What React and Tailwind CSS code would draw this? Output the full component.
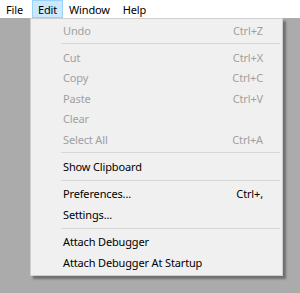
import React from 'react';

const items = [
  { label: 'Undo', key: 'Ctrl+Z', off: true },
  'sep',
  { label: 'Cut', key: 'Ctrl+X', off: true },
  { label: 'Copy', key: 'Ctrl+C', off: true },
  { label: 'Paste', key: 'Ctrl+V', off: true },
  { label: 'Clear', off: true },
  { label: 'Select All', key: 'Ctrl+A', off: true },
  'sep',
  { label: 'Show Clipboard' },
  'sep',
  { label: 'Preferences...', key: 'Ctrl+,' },
  { label: 'Settings...' },
  'sep',
  { label: 'Attach Debugger' },
  { label: 'Attach Debugger At Startup' },
];

const App = () => {
  return (
    <div className="w-[300px] h-[293px] bg-[#ababab] flex flex-col overflow-hidden font-['Noto_Sans',sans-serif] text-[11px] tracking-[-0.15px] leading-none">
      {/* menu bar */}
      <div className="h-[18px] bg-white flex items-stretch pl-[1px] text-black">
        <div className="px-[5px] flex items-center">File</div>
        <div className="w-[31px] justify-center flex items-center bg-[#cce8ff] border border-[#99d1ff] ml-[4px]">Edit</div>
        <div className="px-[6px] flex items-center">Window</div>
        <div className="px-[7px] flex items-center">Help</div>
      </div>

      {/* dropdown */}
      <div className="ml-[30px] w-[253px] bg-[#f0f0f0] border border-[#cfcfcf] shadow-[3px_3px_2px_rgba(0,0,0,0.35)] pt-[1px] pb-[3px]">
        {items.map((it, i) =>
          it === 'sep' ? (
            <div key={i} className="h-[7px] flex items-center pl-[30px] pr-[2px]">
              <div className="h-px w-full bg-[#d7d7d7]" />
            </div>
          ) : (
            <div
              key={i}
              className={`h-[20.4px] flex items-center justify-between pl-[32px] pr-[19px] ${it.off ? 'text-[#a0a0a0]' : 'text-black'}`}
            >
              <span>{it.label}</span>
              {it.key && <span>{it.key}</span>}
            </div>
          )
        )}
      </div>
    </div>
  );
};

export default App;
